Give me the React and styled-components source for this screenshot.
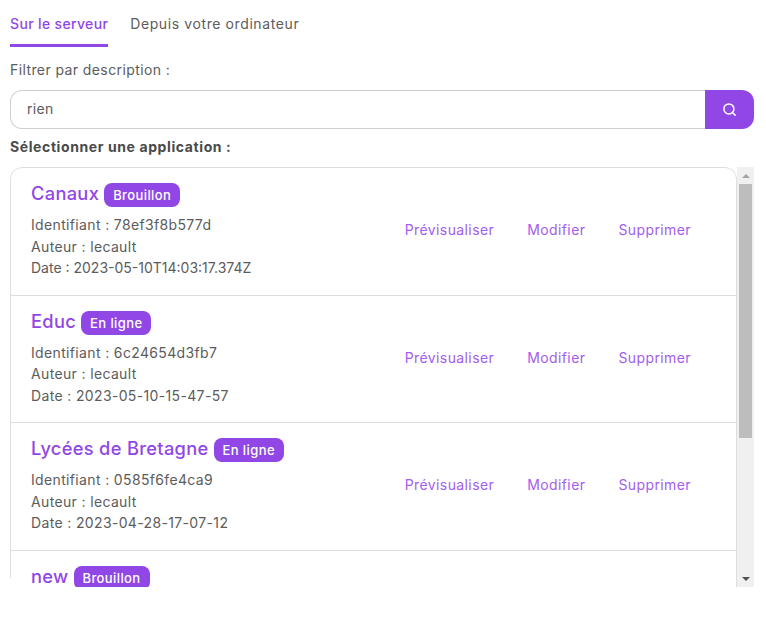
import React from 'react';
import styled, { createGlobalStyle } from 'styled-components';
import { Search } from 'lucide-react';

const purple = '#9147e6';
const text = '#5c5c5c';
const line = '#dedede';

const GlobalStyle = createGlobalStyle`
  html, body {
    margin: 0;
    padding: 0;
    background: #fff;
  }
  body {
    font-family: Inter, "Liberation Sans", sans-serif;
    color: ${text};
    overflow: hidden;
  }
`;

const Page = styled.div`
  width: 744px;
  padding: 0 12px 0 10px;
`;

const Tabs = styled.div`
  display: flex;
  gap: 22px;
  height: 47px;
`;

const Tab = styled.div`
  padding-top: 14px;
  font-size: 14px;
  line-height: 19px;
  letter-spacing: ${props => (props.$active ? '0.35px' : '0.6px')};
  color: ${props => (props.$active ? purple : text)};
  font-weight: ${props => (props.$active ? 500 : 400)};
  border-bottom: ${props => (props.$active ? `3px solid ${purple}` : 'none')};
  box-sizing: border-box;
`;

const Label = styled.div`
  margin-top: 13px;
  font-size: 14px;
  line-height: 19px;
  letter-spacing: 0.4px;
`;

const SearchRow = styled.div`
  display: flex;
  height: 39px;
  margin-top: 11px;
`;

const SearchInput = styled.div`
  flex: 1;
  box-sizing: border-box;
  border: 1px solid #cfcfcf;
  border-right: none;
  border-radius: 12px 0 0 12px;
  padding-left: 16px;
  font-size: 14px;
  line-height: 35px;
  letter-spacing: 0.3px;
`;

const SearchButton = styled.div`
  width: 49px;
  background: ${purple};
  border-radius: 0 12px 12px 0;
  color: #fff;
  display: flex;
  align-items: center;
  justify-content: center;
  padding-bottom: 1px;
  box-sizing: border-box;
`;

const Heading = styled.div`
  margin-top: 8px;
  font-size: 14px;
  line-height: 19px;
  font-weight: 700;
  letter-spacing: 0.6px;
  color: #4a4a4a;
`;

const ListArea = styled.div`
  display: flex;
  margin-top: 11px;
  height: 420px;
`;

const Scroller = styled.div`
  flex: 1;
  overflow: hidden;
  border-radius: 0 0 0 12px;
`;

const List = styled.div`
  box-sizing: border-box;
  border: 1px solid ${line};
  border-radius: 12px;
`;

const Item = styled.div`
  display: flex;
  height: 127.5px;
  box-sizing: border-box;
  padding: 15px 45px 0 20px;
  &:not(:last-child) {
    border-bottom: 1px solid ${line};
  }
`;

const Info = styled.div`
  flex: 1;
`;

const TitleRow = styled.div`
  display: flex;
  align-items: center;
  gap: 5px;
  height: 24px;
  margin-bottom: 7px;
`;

const Title = styled.span`
  font-size: 18.3px;
  font-weight: 500;
  letter-spacing: 0.3px;
  color: ${purple};
  position: relative;
  top: -2px;
`;

const Badge = styled.span`
  background: ${purple};
  color: #fff;
  font-size: 13px;
  font-weight: 500;
  letter-spacing: 0.4px;
  line-height: 24px;
  padding: 0 9px;
  border-radius: 8px;
`;

const Meta = styled.div`
  font-size: 14px;
  line-height: 21.7px;
  letter-spacing: ${props => (props.$tight ? '0' : '0.35px')};
`;

const Actions = styled.div`
  align-self: center;
  display: flex;
  gap: 33px;
  margin-top: -18px;
`;

const Action = styled.a`
  font-size: 14px;
  letter-spacing: 0.4px;
  color: #a35df0;
`;

const ScrollTrack = styled.div`
  width: 17px;
  background: #f0f0f0;
  display: flex;
  flex-direction: column;
`;

const ScrollButton = styled.div`
  height: 17px;
  display: flex;
  align-items: center;
  justify-content: center;
  margin-top: ${props => (props.$down ? 'auto' : '0')};
`;

const Arrow = styled.span`
  width: 0;
  height: 0;
  border-left: 4px solid transparent;
  border-right: 4px solid transparent;
  border-bottom: ${props => (props.$down ? 'none' : '4px solid #a3a3a3')};
  border-top: ${props => (props.$down ? '4px solid #505050' : 'none')};
`;

const Thumb = styled.div`
  height: 254px;
  margin: 0 2px;
  background: #bdbdbd;
`;

const apps = [
  { name: 'Canaux', status: 'Brouillon', id: '78ef3f8b577d', author: 'lecault', date: '2023-05-10T14:03:17.374Z', tightDate: true },
  { name: 'Educ', status: 'En ligne', id: '6c24654d3fb7', author: 'lecault', date: '2023-05-10-15-47-57' },
  { name: 'Lycées de Bretagne', status: 'En ligne', id: '0585f6fe4ca9', author: 'lecault', date: '2023-04-28-17-07-12' },
  { name: 'new', status: 'Brouillon' },
];

export default function App() {
  return (
    <Page>
      <GlobalStyle />
      <Tabs>
        <Tab $active>Sur le serveur</Tab>
        <Tab>Depuis votre ordinateur</Tab>
      </Tabs>
      <Label>Filtrer par description :</Label>
      <SearchRow>
        <SearchInput>rien</SearchInput>
        <SearchButton>
          <Search size={15} strokeWidth={2.4} />
        </SearchButton>
      </SearchRow>
      <Heading>Sélectionner une application :</Heading>
      <ListArea>
        <Scroller>
          <List>
            {apps.map(app => (
              <Item key={app.name}>
                <Info>
                  <TitleRow>
                    <Title>{app.name}</Title>
                    <Badge>{app.status}</Badge>
                  </TitleRow>
                  {app.id && (
                    <>
                      <Meta>Identifiant : {app.id}</Meta>
                      <Meta>Auteur : {app.author}</Meta>
                      <Meta $tight={app.tightDate}>Date : {app.date}</Meta>
                    </>
                  )}
                </Info>
                {app.id && (
                  <Actions>
                    <Action>Prévisualiser</Action>
                    <Action>Modifier</Action>
                    <Action>Supprimer</Action>
                  </Actions>
                )}
              </Item>
            ))}
          </List>
        </Scroller>
        <ScrollTrack>
          <ScrollButton>
            <Arrow />
          </ScrollButton>
          <Thumb />
          <ScrollButton $down>
            <Arrow $down />
          </ScrollButton>
        </ScrollTrack>
      </ListArea>
    </Page>
  );
}
